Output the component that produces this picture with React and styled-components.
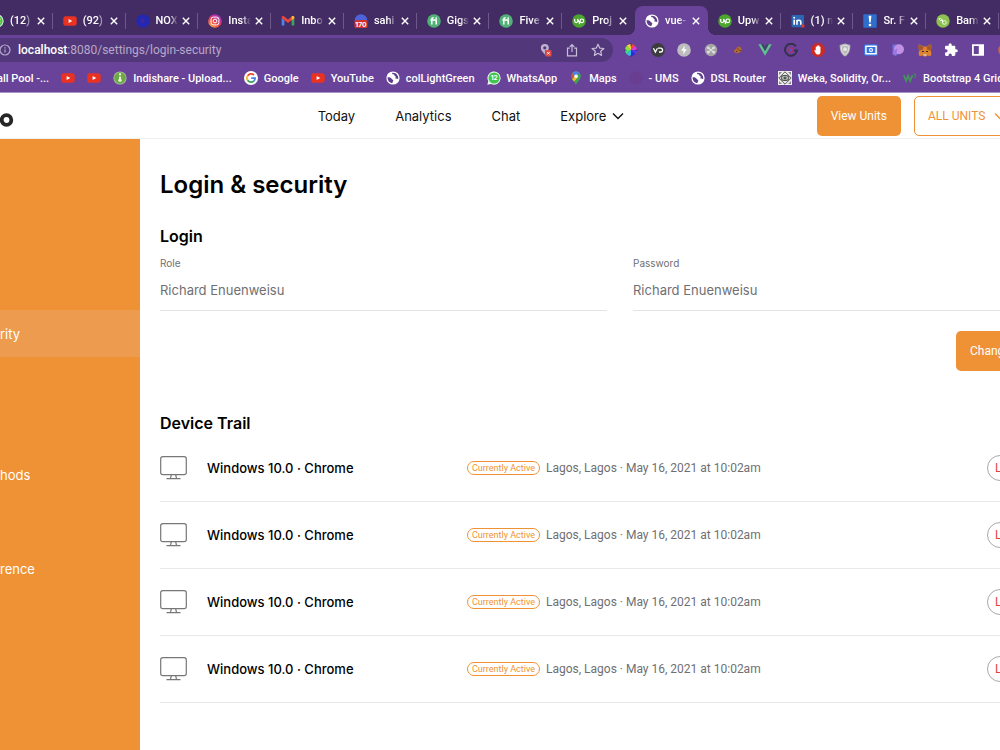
import styled, { createGlobalStyle } from "styled-components";

const bodyFont = `Roboto, "Liberation Sans", sans-serif`;
const wideFont = `Inter, "Liberation Sans", sans-serif`;

/* ---------- icons ---------- */

const YouTube = () => (
  <svg viewBox="0 0 14 14">
    <rect x="0.3" y="2.2" width="13.4" height="9.6" rx="2.4" fill="#ea3223" />
    <path d="M5.6 4.9 9.3 7 5.6 9.1z" fill="#fff" />
  </svg>
);

const Globe = () => (
  <svg viewBox="0 0 14 14">
    <circle cx="7" cy="7" r="6.6" fill="#fff" />
    <path
      d="M1.6 6.2C3.4 6 5.3 6.6 5.6 7.7c.3 1 1.5.7 1.7 1.7.1.8-.7 1-1 2.6C3.5 12 1.5 9.5 1.6 6.2z"
      fill="#5d3d8c"
    />
    <path
      d="M6.2 1.7c-.3 1.3.4 1.6 1.3 1.5 1 0 .5 1.5 1.5 1.7.8.2 1 .9.5 1.5-.4.6-.2 1.2.8 1.2.9 0 1.4.4 1.9.7C12.9 5 10.6 1.3 6.2 1.7z"
      fill="#5d3d8c"
    />
  </svg>
);

const WhatsApp = () => (
  <svg viewBox="0 0 14 14">
    <path d="M.3 13.7 1.3 10.3A6.6 6.6 0 1 1 4 12.9z" fill="#e9f7e9" />
    <circle cx="7.1" cy="7" r="5.6" fill="#43c351" />
    <text x="7.1" y="9.3" fontSize="6.5" fontWeight="700" textAnchor="middle" fill="#fff" fontFamily="Inter">
      12
    </text>
  </svg>
);

const Nox = () => (
  <svg viewBox="0 0 14 14">
    <circle cx="7" cy="7" r="6.6" fill="#2227b4" />
    <path d="M5.2 4 10 7l-4.8 3z" fill="#43279a" />
  </svg>
);

const Instagram = () => (
  <svg viewBox="0 0 14 14">
    <defs>
      <linearGradient id="insta" x1="0.1" y1="1" x2="0.8" y2="0">
        <stop offset="0" stopColor="#fdc04f" />
        <stop offset="0.4" stopColor="#f0483f" />
        <stop offset="0.7" stopColor="#c72d92" />
        <stop offset="1" stopColor="#8a3ad0" />
      </linearGradient>
    </defs>
    <circle cx="7" cy="7" r="6.8" fill="url(#insta)" />
    <rect x="3.1" y="3.1" width="7.8" height="7.8" rx="2.3" fill="none" stroke="#fff" />
    <circle cx="7" cy="7" r="1.9" fill="none" stroke="#fff" />
    <circle cx="9.2" cy="4.8" r="0.5" fill="#fff" />
  </svg>
);

const Gmail = () => (
  <svg viewBox="0 0 14 14">
    <path d="M.7 4v7.600h2.700V6.200z" fill="#4a86f0" />
    <path d="M13.300 4v7.600h-2.700V6.200z" fill="#3aa757" />
    <path d="M.7 4.300V3.200c0-1.200 1.300-1.700 2.200-1L7 5.400l4.100-3.200c.9-.7 2.200-.2 2.200 1v1.100L7 9z" fill="#e8453c" />
    <path d="M10.600 2.600c1-.9 2.700-.5 2.700.8v1L10.600 6.300z" fill="#f7bb2e" />
  </svg>
);

const Mail170 = () => (
  <svg viewBox="0 0 14 14">
    <circle cx="7" cy="6.5" r="6.3" fill="#4d63dc" />
    <rect x="0.5" y="6" width="13" height="8" rx="1.5" fill="#d2322d" />
    <text x="7" y="12.5" fontSize="6.8" fontWeight="700" textAnchor="middle" fill="#fff" fontFamily="Inter">
      170
    </text>
  </svg>
);

const Fiverr = () => (
  <svg viewBox="0 0 14 14">
    <circle cx="7" cy="7" r="6.8" fill="#51b277" />
    <path d="M4.8 10.5V5.2c0-1 .6-1.5 1.9-1.4M3.5 6.1h5.7v4.4" fill="none" stroke="#fff" strokeWidth="1.5" />
    <circle cx="9.2" cy="4.1" r="0.9" fill="#fff" />
  </svg>
);

const Upwork = () => (
  <svg viewBox="0 0 14 14">
    <circle cx="7" cy="7" r="6.8" fill="#4ba52f" />
    <path
      d="M2.700 5v2.100a1.500 1.500 0 0 0 3 0V5c.5 1.800 1.300 3 2.100 3.700M7.300 10.200l.8-3.600a1.800 1.800 0 1 1 1.600 2c-.9 0-1.500-.5-2.100-1.200"
      fill="none"
      stroke="#fff"
      strokeWidth="1.2"
    />
  </svg>
);

const LinkedIn = () => (
  <svg viewBox="0 0 14 14">
    <rect x="0.5" y="1" width="12.5" height="12.3" rx="1" fill="#2c67b6" />
    <path d="M3.2 5.7v5M6 10.7v-5m0 2.3c.2-2.3 3.8-2.3 3.8.2v2.5" fill="none" stroke="#fff" strokeWidth="1.6" />
    <circle cx="3.2" cy="3.8" r="1" fill="#fff" />
    <circle cx="12" cy="12" r="1.7" fill="#d93a35" />
  </svg>
);

const Alert = () => (
  <svg viewBox="0 0 14 14">
    <rect x="0.3" y="0.3" width="13.4" height="13.4" rx="1" fill="#2f6fcb" />
    <path d="M5.6 1.8h2.8L7.7 8.6H6.3z" fill="#fff" />
    <circle cx="7" cy="11" r="1.3" fill="#fff" />
  </svg>
);

const Bamboo = () => (
  <svg viewBox="0 0 14 14">
    <circle cx="7" cy="7" r="6.7" fill="#8dc152" />
    <path d="M3.3 4.5c1.8-.2 2.6.7 2.5 2.1-1.5.3-2.5-.5-2.5-2.1zM6.5 8.9V5.6" fill="none" stroke="#f4fae9" />
    <circle cx="8.4" cy="8.5" r="1.8" fill="none" stroke="#f4fae9" />
  </svg>
);

const Indishare = () => (
  <svg viewBox="0 0 14 14">
    <circle cx="7" cy="7" r="6.6" fill="#a9bf9c" />
    <circle cx="7" cy="7" r="5.8" fill="#6da844" />
    <path d="M7 5.5v5.3M5.3 9.4h3.4" fill="none" stroke="#eaf4e4" strokeWidth="1.9" />
    <circle cx="7" cy="3.3" r="1.1" fill="#fff" />
  </svg>
);

const Google = () => (
  <svg viewBox="0 0 14 14">
    <circle cx="7" cy="7" r="7" fill="#fff" />
    <g fill="none" strokeWidth="1.8">
      <path d="M3.600 4.700A4.100 4.100 0 0 1 9.900 4.100" stroke="#e64a3b" />
      <path d="M3.600 9.300a4.100 4.100 0 0 1 0-4.600" stroke="#f5b92c" />
      <path d="M3.600 9.300a4.100 4.100 0 0 0 6.200.7" stroke="#3da35a" />
      <path d="M7.200 7.200h3.900a4.100 4.100 0 0 1-1.300 2.800" stroke="#4a80e8" />
    </g>
  </svg>
);

const Maps = () => (
  <svg viewBox="0 0 14 14">
    <path d="M7 14C6.500 11 2.200 9 2.200 5.200A4.800 4.800 0 0 1 11.800 5.200C11.800 9 7.500 11 7 14z" fill="#3ba457" />
    <path d="M3.200 8.200 10.600 2.100A4.800 4.800 0 0 0 3.300 2.100z" fill="#e6483a" />
    <path d="M3.300 2.100A4.700 4.700 0 0 1 10.500 1.900L6.300 6.300z" fill="#4b84e7" />
    <path d="M3.200 8.200 8 3.200l1 3.100-4 4.300z" fill="#f2bb35" />
    <circle cx="7" cy="5.200" r="1.700" fill="#fff" />
  </svg>
);

const Ums = () => (
  <svg viewBox="0 0 14 14">
    <circle cx="7" cy="7" r="6.2" fill="#683f94" stroke="#703c8a" strokeDasharray="2 1" />
    <path d="M4 5h6M4 7h6M4 9h6" stroke="#6d3d8c" strokeWidth="0.7" />
  </svg>
);

const Weka = () => (
  <svg viewBox="0 0 14 14">
    <rect width="14" height="14" fill="#eeeeec" />
    <path d="M7 .8 13.2 7 7 13.2.8 7z" fill="none" stroke="#444" strokeWidth="0.9" />
    <path d="M1 1h3L1 4zM13 1h-3l3 3zM1 13h3l-3-3zM13 13h-3l3-3z" fill="#8a8a88" />
    <ellipse cx="7" cy="7" rx="4" ry="2.7" fill="#b6beb8" stroke="#444" />
    <circle cx="7" cy="7" r="1.5" fill="#4c5a51" />
  </svg>
);

const W3 = () => (
  <svg viewBox="0 0 14 14">
    <path d="m.8 4.2 2.3 5.6 2-5 2.1 5 2.4-5.6" fill="none" stroke="#44935a" strokeWidth="1.9" />
    <path d="M10.500 3h2.200l-1 1.400c1.400 0 1.400 2-.2 2-.6 0-1-.2-1.200-.6" fill="none" stroke="#44935a" strokeWidth="0.9" />
  </svg>
);

const wheel = ["#f4443c", "#e435e0", "#4a3df0", "#2c2ad8", "#35bfe8", "#3fe08a", "#93e53c", "#f0d23c"];

const ColorWheel = () => (
  <svg viewBox="0 0 14 14">
    {wheel.map((color, i) => (
      <path key={color} d="M7 7 7 1a6 6 0 0 1 4.2 1.8z" fill={color} transform={`rotate(${i * 45} 7 7)`} />
    ))}
    <path d="M7 .2v3M13.6 7h-2M7 13.8v-2M.4 7h2" stroke="#33264a" strokeWidth="0.8" />
  </svg>
);

const Vd = () => (
  <svg viewBox="0 0 14 14">
    <circle cx="7" cy="7" r="6.9" fill="#3c3c3e" />
    <path d="m2.400 5.200 2 3.800 2-3.800M7 5.200h2.700a1.900 1.900 0 0 1 0 3.800H8" fill="none" stroke="#fff" strokeWidth="1.3" />
  </svg>
);

const Bolt = () => (
  <svg viewBox="0 0 14 14">
    <circle cx="7" cy="7" r="6.8" fill="#bdbdbf" />
    <path d="M7.8 2.5 4.2 7.7h2.5L6.2 11.5 9.8 6.3H7.3z" fill="#fff" />
  </svg>
);

const Clover = () => (
  <svg viewBox="0 0 14 14">
    <circle cx="7" cy="7" r="6.2" fill="#a3a2a5" />
    <path d="M4 4.5 10 9.5M10 4.5 4 9.5" stroke="#dcdcdc" strokeWidth="1.2" />
    <circle cx="4.3" cy="4.8" r="1.4" fill="#dedede" />
    <circle cx="9.7" cy="4.8" r="1.4" fill="#dedede" />
    <circle cx="4.3" cy="9.2" r="1.4" fill="#dedede" />
    <circle cx="9.7" cy="9.2" r="1.4" fill="#dedede" />
  </svg>
);

const Cookie = () => (
  <svg viewBox="0 0 14 14">
    <path d="M3 8c0-1.200 1.500-1 2.200-2.500C6 4 8 2.700 9 4.100c1.200.3 2 1.500 1.200 3.100C9.800 9 8 10.600 6 10.200c-1.700 0-3-.7-3-2.200z" fill="#b1692f" />
    <path d="M6.500 6h1M8.500 7.500h1M5 8.500h1" stroke="#50301d" />
  </svg>
);

const Vue = () => (
  <svg viewBox="0 0 14 14">
    <path d="M.3 1.200h2.900L7 7.900l3.800-6.700h2.900L7 12.800z" fill="#5fc38c" />
    <path d="M3.200 1.200h2.300L7 3.900l1.500-2.700h2.300L7 7.900z" fill="#3a4a66" />
  </svg>
);

const Grep = () => (
  <svg viewBox="0 0 14 14">
    <path d="M11.900 3.200A6 6 0 1 0 13 7.500H9.500" fill="none" stroke="#35304a" strokeWidth="1.9" />
    <circle cx="7" cy="7" r="2.2" fill="none" stroke="#b32f6c" strokeWidth="1.1" />
    <circle cx="7" cy="7" r="0.9" fill="#3d6ae0" />
  </svg>
);

const AdBlock = () => (
  <svg viewBox="0 0 14 14">
    <path d="M4.200.3h5.600l3.900 3.900v5.600l-3.900 3.900H4.200L.3 9.800V4.200z" fill="#cd2a22" />
    <path
      d="M4.700 6.500V4a.6.600 0 0 1 1.200 0V3a.6.600 0 0 1 1.200 0v-.2a.6.600 0 0 1 1.200 0V4a.6.600 0 0 1 1.200 0v5c0 1.600-1 2.600-2.400 2.600-1.200 0-2-.6-2.600-1.700L3.400 7.800c-.3-.8.500-1.200 1.300-.2z"
      fill="#fff"
    />
  </svg>
);

const Shield = () => (
  <svg viewBox="0 0 14 14">
    <path d="M7 .5 12.300 2c.2 5-1.300 9.500-5.300 11.500C3 11.500 1.500 7 1.700 2z" fill="#b7b7b9" />
    <path d="M7 2.200 10.700 3.300c0 4-1 6.700-3.700 8.400-2.700-1.700-3.700-4.400-3.700-8.400z" fill="none" stroke="#e6e6e6" strokeWidth="0.9" />
    <circle cx="7" cy="6.2" r="1.9" fill="#e6e6e6" />
  </svg>
);

const Camera = () => (
  <svg viewBox="0 0 14 14">
    <rect x="0.6" y="1.9" width="12.8" height="10.2" rx="1" fill="#fff" stroke="#3b74e0" strokeWidth="1.2" />
    <rect x="2.6" y="4" width="8.8" height="6" fill="#3b74e0" />
    <circle cx="7" cy="7" r="2" fill="#fff" />
    <circle cx="7" cy="7" r="0.9" fill="#3b74e0" />
  </svg>
);

const Blob = () => (
  <svg viewBox="0 0 14 14">
    <path d="M1.500 1.500h6v9.500l-3 2-3-1.500z" fill="#6f71df" />
    <circle cx="8" cy="6.3" r="5" fill="#c191e6" />
    <path d="M2 8.500 6.500 5 5 12.500 2 11z" fill="#a272e2" />
  </svg>
);

const Fox = () => (
  <svg viewBox="0 0 14 14">
    <path d="M1 1 5.500 3.500h3L13 1l.6 4-.9 2.500.8 3-1 2.700-3.200-.8L8 13.500H6l-1.300-1.100-3.200.8-1-2.700.8-3L.4 5z" fill="#df822f" />
    <path d="M1 1 5.500 4 4.700 6.800 1.300 7.500.4 5zM13 1 8.500 4l.8 2.800 3.400.7.9-2.500z" fill="#a35a2b" />
    <path d="M4 8h1.800v1H4zM8.200 8H10v1H8.200z" fill="#2b2631" />
    <path d="M5.700 11h2.600l.3 1.700H5.400z" fill="#d9c2ae" />
  </svg>
);

const Puzzle = () => (
  <svg viewBox="0 0 24 24">
    <path
      d="M21 10.800h-1.600V6.600c0-1.100-.9-2-2-2h-4.200V3a2.600 2.600 0 0 0-5.200 0v1.600H3.800c-1.100 0-2 .9-2 2v4h1.600a2.800 2.800 0 0 1 0 5.600H1.800v4c0 1.100.9 2 2 2h4v-1.600a2.800 2.800 0 0 1 5.600 0v1.600h4c1.100 0 2-.9 2-2V16H21a2.600 2.600 0 0 0 0-5.200z"
      fill="#fff"
    />
  </svg>
);

const SidePanel = () => (
  <svg viewBox="0 0 14 14">
    <path d="M1 1.200h12v11.600H1zM2.800 3v8h5V3z" fill="#fff" fillRule="evenodd" />
  </svg>
);

const Avatar = () => (
  <svg viewBox="0 0 14 14">
    <circle cx="7" cy="7" r="6.8" fill="#c9644f" />
    <circle cx="6" cy="6" r="4" fill="#df8f73" />
  </svg>
);

const Info = () => (
  <svg viewBox="0 0 14 14" fill="none" stroke="#b7a9ca">
    <circle cx="7" cy="7" r="5" strokeWidth="1.2" />
    <path d="M7 6.400v3.200M7 4.200v1.200" strokeWidth="1.2" />
  </svg>
);

const PinBlocked = () => (
  <svg viewBox="0 0 14 14">
    <path d="M5.800 11.700C4.500 9.500 1.800 7.800 1.800 5a4 4 0 0 1 8 0c0 1-.3 1.700-.8 2.300H6.300z" fill="#bfb2cf" />
    <circle cx="5.8" cy="4.8" r="1.6" fill="#52387a" />
    <rect x="6.3" y="7" width="6.2" height="6.5" rx="1" fill="#dc4b45" />
    <path d="m8.200 9.100 2.400 2.400m0-2.400-2.400 2.400" stroke="#fff" strokeWidth="0.9" />
  </svg>
);

const Share = () => (
  <svg viewBox="0 0 14 14" fill="none" stroke="#c9bed8" strokeWidth="1.2">
    <path d="M4.800 5.200H2.500v7.600h9V5.200H9.200M7 9V1.700M4.700 3.900 7 1.600l2.300 2.300" />
  </svg>
);

const Star = () => (
  <svg viewBox="0 0 14 14" fill="none" stroke="#c9bed8" strokeWidth="1.2" strokeLinejoin="round">
    <path d="m7 1.200 1.700 3.900 4.200.4-3.200 2.800.9 4.100L7 10.300l-3.600 2.100.9-4.100L1.100 5.500l4.200-.4z" />
  </svg>
);

const CloseIcon = () => (
  <svg width="8" height="8" viewBox="0 0 8 8" fill="none" stroke="#fff" strokeWidth="1.4">
    <path d="m.8.8 6.400 6.400m0-6.400L.8 7.200" />
  </svg>
);

const Chevron = ({ color = "#111" }) => (
  <svg width="12" height="8" viewBox="0 0 12 8" fill="none" stroke={color} strokeWidth="1.4">
    <path d="m1 1.500 5 5 5-5" />
  </svg>
);

const Ring = () => (
  <svg width="14" height="14" viewBox="0 0 14 14">
    <circle cx="6.5" cy="7" r="4.8" fill="none" stroke="#262626" strokeWidth="3.8" />
  </svg>
);

const Monitor = () => (
  <svg width="27" height="24" viewBox="0 0 27 24" fill="none" stroke="#77777a" strokeWidth="1.2">
    <rect x="0.7" y="0.7" width="25.6" height="18" rx="2.2" />
    <path d="M6.500 22.600h14M11.300 18.800l-.8 3.600M15.700 18.800l.8 3.600" />
  </svg>
);

/* ---------- data ---------- */

const tabs = [
  { title: "(12)", Icon: WhatsApp },
  { title: "(92)", Icon: YouTube },
  { title: "NOX", Icon: Nox },
  { title: "Insta", Icon: Instagram },
  { title: "Inbo", Icon: Gmail },
  { title: "sahi", Icon: Mail170 },
  { title: "Gigs", Icon: Fiverr },
  { title: "Five", Icon: Fiverr },
  { title: "Proj", Icon: Upwork },
  { title: "vue-", Icon: Globe, active: true },
  { title: "Upw", Icon: Upwork },
  { title: "(1) n", Icon: LinkedIn },
  { title: "Sr. F", Icon: Alert },
  { title: "Bam", Icon: Bamboo },
];

const extensions = [
  ColorWheel, Vd, Bolt, Clover, Cookie, Vue, Grep, AdBlock,
  Shield, Camera, Blob, Fox, Puzzle, SidePanel, Avatar,
];

const bookmarks = [
  { title: "all Pool -..." },
  { Icon: YouTube },
  { Icon: YouTube },
  { title: "Indishare - Upload...", Icon: Indishare },
  { title: "Google", Icon: Google },
  { title: "YouTube", Icon: YouTube },
  { title: "colLightGreen", Icon: Globe },
  { title: "WhatsApp", Icon: WhatsApp },
  { title: "Maps", Icon: Maps },
  { title: "- UMS", Icon: Ums },
  { title: "DSL Router", Icon: Globe },
  { title: "Weka, Solidity, Or...", Icon: Weka },
  { title: "Bootstrap 4 Grid", Icon: W3 },
];

const sideLinks = [
  { title: "rity", row: 1, active: true },
  { title: "hods", row: 4 },
  { title: "rence", row: 6 },
];

const devices = [1, 2, 3, 4];

/* ---------- app ---------- */

function Browser() {
  return (
    <BrowserStyle>
      <TabStrip>
        {tabs.map(({ title, Icon, active }) => (
          <Tab key={title} $active={active}>
            <Favicon><Icon /></Favicon>
            <TabTitle>{title}</TabTitle>
            <TabClose aria-label="Close tab"><CloseIcon /></TabClose>
          </Tab>
        ))}
      </TabStrip>
      <Toolbar>
        <Address>
          <Favicon><Info /></Favicon>
          <Url><b>localhost</b>:8080/settings/login-security</Url>
          <AddressTools>
            <IconButton aria-label="Location"><PinBlocked /></IconButton>
            <IconButton aria-label="Share"><Share /></IconButton>
            <IconButton aria-label="Bookmark"><Star /></IconButton>
          </AddressTools>
        </Address>
        <Extensions>
          {extensions.map((Icon, i) => (
            <IconButton key={i} aria-label="Extension"><Icon /></IconButton>
          ))}
        </Extensions>
      </Toolbar>
      <Bookmarks>
        {bookmarks.map(({ title, Icon }, i) => (
          <Bookmark key={i} href="#" aria-label={title ? undefined : "Bookmark"}>
            {Icon && <Favicon><Icon /></Favicon>}
            {title}
          </Bookmark>
        ))}
      </Bookmarks>
    </BrowserStyle>
  );
}

function Header() {
  return (
    <HeaderStyle>
      <Logo href="#" aria-label="Home"><Ring /></Logo>
      <Nav>
        <NavLink href="#">Today</NavLink>
        <NavLink href="#">Analytics</NavLink>
        <NavLink href="#">Chat</NavLink>
        <NavLink href="#">Explore <Chevron /></NavLink>
      </Nav>
      <Actions>
        <Button>View Units</Button>
        <UnitPicker>
          <UnitSelect aria-label="Units">
            <option>ALL UNITS</option>
          </UnitSelect>
          <Chevron color="#ef9235" />
        </UnitPicker>
      </Actions>
    </HeaderStyle>
  );
}

function Sidebar() {
  return (
    <SidebarStyle>
      {sideLinks.map(({ title, row, active }) => (
        <SideLink key={title} href="#" $row={row} $active={active}>{title}</SideLink>
      ))}
    </SidebarStyle>
  );
}

function Field({ id, label, value }) {
  return (
    <div>
      <Label htmlFor={id}>{label}</Label>
      <Input id={id} defaultValue={value} />
    </div>
  );
}

function App() {
  return (
    <Page>
      <GlobalStyle />
      <Browser />
      <Header />
      <Layout>
        <Sidebar />
        <Main>
          <Title>Login & security</Title>
          <section>
            <Heading>Login</Heading>
            <Fields>
              <Field id="role" label="Role" value="Richard Enuenweisu" />
              <Field id="password" label="Password" value="Richard Enuenweisu" />
            </Fields>
            <FormActions>
              <ChangeButton>Chang</ChangeButton>
            </FormActions>
          </section>
          <DeviceSection>
            <Heading>Device Trail</Heading>
            <DeviceList>
              {devices.map((id) => (
                <Device key={id}>
                  <Monitor />
                  <DeviceName>Windows 10.0 · Chrome</DeviceName>
                  <Badge>Currently Active</Badge>
                  <DeviceInfo>Lagos, Lagos · May 16, 2021 at 10:02am</DeviceInfo>
                  <LogoutButton>L</LogoutButton>
                </Device>
              ))}
            </DeviceList>
          </DeviceSection>
        </Main>
      </Layout>
    </Page>
  );
}

/* ---------- styles ---------- */

const GlobalStyle = createGlobalStyle`
  * {
    box-sizing: border-box;
  }

  body {
    margin: 0;
    font-family: ${bodyFont};
    background: #fff;
    color: #000;
  }

  a {
    color: inherit;
    text-decoration: none;
  }

  button, input, select {
    font-family: inherit;
    margin: 0;
  }

  button {
    cursor: pointer;
  }
`;

const Page = styled.div`
  display: flex;
  flex-direction: column;
  min-height: 100vh;
  overflow: hidden;
`;

const BrowserStyle = styled.div`
  background: #684399;
  border-bottom: 1px solid #a893c4;
  color: #fff;
  font-size: 11px;
  font-weight: 500;
`;

const TabStrip = styled.div`
  display: flex;
  height: 35px;
  padding: 6px 1px 0 0;
  background: #432b63;

  > * {
    flex: 1 1 0;
  }

  > :first-child {
    margin-left: -20px;
  }
`;

const Tab = styled.div`
  position: relative;
  display: flex;
  align-items: center;
  min-width: 0;
  padding: 0 8px 0 10px;
  border-radius: 8px 8px 0 0;
  background: ${({ $active }) => ($active ? "#684399" : "transparent")};

  /* divider on idle tabs, flared feet on the active one */
  &::after {
    content: "";
    position: absolute;
    ${({ $active }) =>
      $active
        ? `
      left: -8px;
      right: -8px;
      bottom: 0;
      height: 8px;
      background:
        radial-gradient(circle at 0 0, transparent 8px, #684399 8px) left / 8px 8px no-repeat,
        radial-gradient(circle at 100% 0, transparent 8px, #684399 8px) right / 8px 8px no-repeat;
    `
        : `
      right: 0;
      top: 7px;
      height: 16px;
      width: 1px;
      background: #6d5889;
    `}
  }

  &:nth-child(9)::after {
    display: none;
  }
`;

const Favicon = styled.span`
  flex: none;
  display: flex;
  width: 14px;
  height: 14px;

  svg {
    width: 14px;
    height: 14px;
  }
`;

const TabTitle = styled.span`
  flex: 1;
  min-width: 0;
  margin: 0 4px 0 6px;
  overflow: hidden;
  white-space: nowrap;
  mask-image: linear-gradient(90deg, #000 60%, transparent);
`;

const TabClose = styled.button`
  display: flex;
  padding: 0;
  border: 0;
  background: none;
`;

const Toolbar = styled.div`
  display: flex;
  align-items: center;
  height: 29px;
  padding-top: 1px;
`;

const Address = styled.div`
  flex: 1;
  display: flex;
  align-items: center;
  height: 24px;
  margin-left: -20px;
  padding: 0 8px 0 18px;
  border-radius: 12px;
  background: #52387a;
`;

const Url = styled.span`
  flex: 1;
  margin-left: 6px;
  color: #b7a9ca;
  font-size: 12px;
  font-weight: 400;

  b {
    color: #fff;
    font-weight: 500;
  }
`;

const AddressTools = styled.div`
  display: flex;
  gap: 12px;
`;

const IconButton = styled.button`
  display: flex;
  padding: 0;
  border: 0;
  background: none;

  svg {
    width: 14px;
    height: 14px;
  }
`;

const Extensions = styled.div`
  flex: 0 0 388px;
  display: flex;
  justify-content: space-between;
  margin: 0 -12px 0 11px;
`;

const Bookmarks = styled.nav`
  display: flex;
  align-items: center;
  gap: 12px;
  height: 28px;
  margin-left: -3px;
`;

const Bookmark = styled.a`
  flex: none;
  display: flex;
  align-items: center;
  gap: 6px;
  white-space: nowrap;
`;

const HeaderStyle = styled.header`
  display: grid;
  grid-template-columns: 1fr auto 1fr;
  align-items: center;
  height: 46px;
  margin: 0 -20px 0 -78px;
  border-bottom: 1px solid #f0f0f0;
`;

const Logo = styled.a`
  display: flex;
  padding: 8px 0 0 78px;
`;

const Nav = styled.nav`
  display: flex;
  gap: 40px;
`;

const NavLink = styled.a`
  display: flex;
  align-items: center;
  gap: 6px;
  color: #111;
  font-family: ${wideFont};
  font-size: 13px;
`;

const Actions = styled.div`
  display: flex;
  justify-content: flex-end;
  gap: 13px;
`;

const Button = styled.button`
  height: 40px;
  padding: 0 14px;
  border: 0;
  border-radius: 5px;
  background: #ef9235;
  color: #fff;
  font-size: 12px;
`;

const UnitPicker = styled.div`
  display: flex;
  align-items: center;
  gap: 8px;
  height: 40px;
  padding: 0 13px;
  border: 1px solid #ef9235;
  border-radius: 5px;
`;

const UnitSelect = styled.select`
  appearance: none;
  padding: 0;
  border: 0;
  background: none;
  color: #ef9235;
  font-size: 12px;
`;

const Layout = styled.div`
  flex: 1;
  display: flex;
`;

const SidebarStyle = styled.nav`
  flex: 0 0 140px;
  display: grid;
  grid-auto-rows: 47px;
  align-content: start;
  padding-top: 171px;
  background: #ef9235;
`;

const SideLink = styled.a`
  grid-row: ${({ $row }) => $row};
  display: flex;
  align-items: center;
  background: ${({ $active }) => ($active ? "#ed9c4f" : "transparent")};
  color: #fff;
  font-family: ${wideFont};
  font-size: 13px;
`;

const Main = styled.main`
  flex: 1;
  margin-right: -80px;
  padding: 31px 0 40px 20px;
`;

const Title = styled.h1`
  margin: 0 0 24px;
  font-family: ${wideFont};
  font-size: 24px;
  font-weight: 600;
  line-height: 30px;
`;

const Heading = styled.h2`
  margin: 0;
  font-family: ${wideFont};
  font-size: 16px;
  font-weight: 600;
  line-height: 24px;
`;

const Fields = styled.div`
  display: grid;
  grid-template-columns: 1fr 1fr;
  gap: 26px;
  margin-top: 8px;
`;

const Label = styled.label`
  display: block;
  color: #6f6f73;
  font-family: ${wideFont};
  font-size: 10px;
  line-height: 14px;
`;

const Input = styled.input`
  display: block;
  width: 100%;
  height: 41px;
  padding: 0;
  border: 0;
  border-bottom: 1px solid #e4e4e4;
  background: none;
  color: #6f6f73;
  font-family: ${wideFont};
  font-size: 13px;
`;

const FormActions = styled.div`
  display: flex;
  justify-content: flex-end;
  margin-top: 20px;
`;

const ChangeButton = styled(Button)`
  min-width: 124px;
  text-align: left;
`;

const DeviceSection = styled.section`
  margin-top: 40px;
`;

const DeviceList = styled.ul`
  margin: 0;
  padding: 0;
  list-style: none;
`;

const Device = styled.li`
  display: flex;
  align-items: center;
  height: 67px;
  border-bottom: 1px solid #e8e8e8;
`;

const DeviceName = styled.span`
  width: 260px;
  margin-left: 20px;
  font-family: ${wideFont};
  font-size: 13px;
  font-weight: 500;
`;

const Badge = styled.span`
  padding: 0 4px;
  border: 1px solid #ef9235;
  border-radius: 7px;
  color: #ef9235;
  font-size: 9px;
  line-height: 12px;
`;

const DeviceInfo = styled.span`
  margin-left: 6px;
  color: #6f6f73;
  font-size: 12px;
`;

const LogoutButton = styled.button`
  width: 93px;
  height: 26px;
  margin-left: auto;
  padding: 0 7px;
  border: 1px solid #a9a9ab;
  border-radius: 13px;
  background: #fff;
  color: #e0453d;
  font-size: 12px;
  text-align: left;
`;

export default App;
